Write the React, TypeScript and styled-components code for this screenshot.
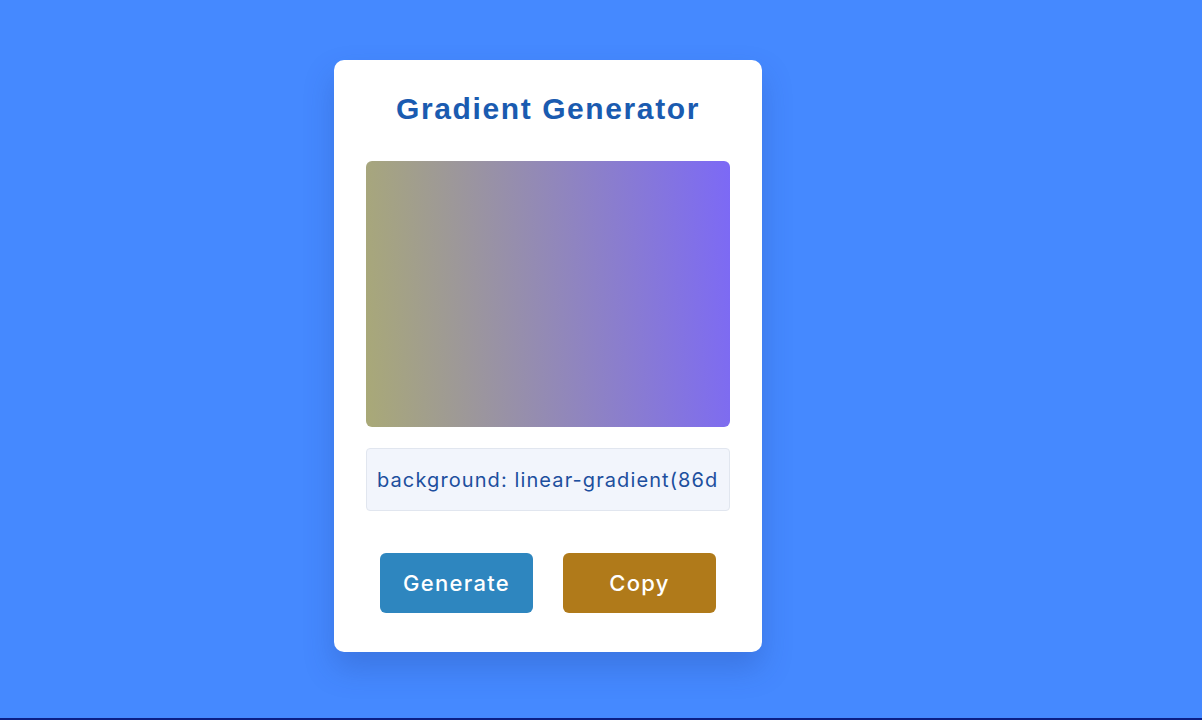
import styled, { createGlobalStyle } from "styled-components";

const GlobalStyle = createGlobalStyle`
  * { box-sizing: border-box; }
  body {
    margin: 0;
    background: #4589ff;
    font-family: "Inter", "Open Sans", sans-serif;
  }
`;

const Page = styled.div`
  min-height: 100vh;
  padding: 60px 0 0 334px;
  border-bottom: 2px solid #0b1f86;
`;

const Card = styled.div`
  width: 428px;
  background: #ffffff;
  border-radius: 10px;
  padding: 28px 32px 39px;
  box-shadow: 0 16px 30px rgba(30, 60, 140, 0.25);
  display: flex;
  flex-direction: column;
  align-items: stretch;
`;

const Title = styled.h1`
  margin: 0 0 31px;
  text-align: center;
  font-family: "Liberation Sans", Arial, sans-serif;
  font-weight: 700;
  font-size: 30px;
  letter-spacing: 1.6px;
  line-height: 42px;
  color: #1a5bb0;
`;

const Preview = styled.div<{ $from: string; $to: string; $angle: number }>`
  height: 266px;
  border-radius: 6px;
  background: linear-gradient(
    ${(p) => p.$angle}deg,
    ${(p) => p.$from},
    ${(p) => p.$to}
  );
`;

const CodeField = styled.input`
  margin-top: 21px;
  height: 63px;
  width: 100%;
  border: 1px solid #e1e6ef;
  border-radius: 4px;
  background: #f2f5fc;
  padding: 0 10px;
  font-family: "Inter", "Open Sans", sans-serif;
  font-size: 20px;
  letter-spacing: 1.1px;
  color: #1d4f9e;
  outline: none;
`;

const Buttons = styled.div`
  margin-top: 42px;
  display: flex;
  justify-content: center;
  gap: 30px;
`;

const Button = styled.button<{ $bg: string }>`
  width: 153px;
  height: 60px;
  border: none;
  border-radius: 6px;
  background: ${(p) => p.$bg};
  color: #ffffff;
  font-family: "Inter", "Open Sans", sans-serif;
  font-weight: 500;
  font-size: 22px;
  letter-spacing: 1.3px;
  cursor: pointer;
`;

export default function App() {
  const from = "#a9a977";
  const to = "#7c69f6";
  const angle = 86;
  const css = `background: linear-gradient(${angle}deg, ${from}, ${to});`;

  return (
    <>
      <GlobalStyle />
      <Page>
        <Card>
          <Title>Gradient Generator</Title>
          <Preview $from={from} $to={to} $angle={angle} />
          <CodeField readOnly value={css} />
          <Buttons>
            <Button $bg="#2e86bf">Generate</Button>
            <Button $bg="#b07a1a">Copy</Button>
          </Buttons>
        </Card>
      </Page>
    </>
  );
}
